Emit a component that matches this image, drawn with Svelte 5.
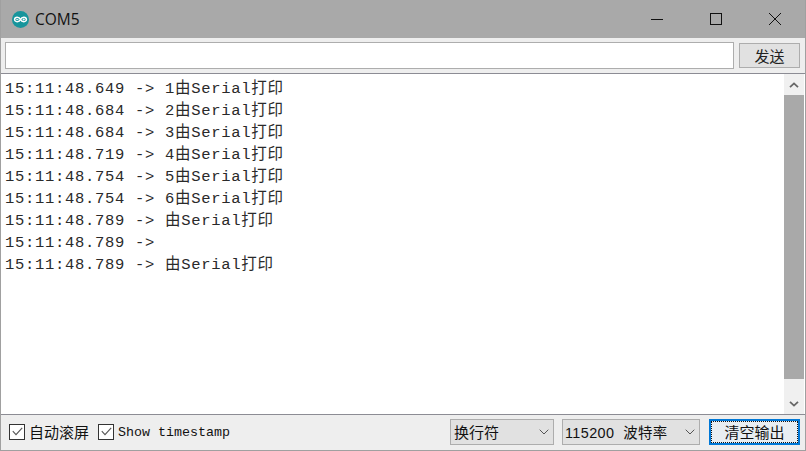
<script>
  const lines = [
    ['15:11:48.649', '1由Serial打印'],
    ['15:11:48.684', '2由Serial打印'],
    ['15:11:48.684', '3由Serial打印'],
    ['15:11:48.719', '4由Serial打印'],
    ['15:11:48.754', '5由Serial打印'],
    ['15:11:48.754', '6由Serial打印'],
    ['15:11:48.789', '由Serial打印'],
    ['15:11:48.789', ''],
    ['15:11:48.789', '由Serial打印']
  ];
</script>

<div class="window">
  <header class="titlebar">
    <svg class="logo" viewBox="0 0 16 16" width="17" height="17">
      <circle cx="8" cy="8" r="8" fill="#17959c" />
      <path d="M8 8C6.8 5.4 2.8 5.2 2.4 8C2.8 10.8 6.8 10.6 8 8C9.2 5.4 13.2 5.2 13.6 8C13.2 10.8 9.2 10.6 8 8Z" fill="none" stroke="#fff" stroke-width="1.4" />
      <path d="M4 8H6M10 8H12M11 7V9" stroke="#fff" stroke-width=".8" />
    </svg>
    <span class="title">COM5</span>
    <div class="controls">
      <svg width="14" height="14" viewBox="0 0 14 14"><path d="M1 7.5H13" stroke="#111" fill="none" /></svg>
      <svg width="14" height="14" viewBox="0 0 14 14"><rect x="1.5" y="1.5" width="11" height="11" stroke="#111" fill="none" /></svg>
      <svg width="14" height="14" viewBox="0 0 14 14"><path d="M1 1L13 13M13 1L1 13" stroke="#111" fill="none" /></svg>
    </div>
  </header>

  <div class="sendbar">
    <input class="input" type="text" />
    <button class="send">发送</button>
  </div>

  <div class="output">
    <div class="log">
      {#each lines as l}
        <div class="line">{l[0]} -&gt; {l[1]}</div>
      {/each}
    </div>
    <div class="scrollbar">
      <div class="arrow">
        <svg width="10" height="6" viewBox="0 0 10 6"><path d="M1 5.2L5 1.4L9 5.2" fill="none" stroke="#666" stroke-width="1.8" /></svg>
      </div>
      <div class="thumb"></div>
      <div class="arrow">
        <svg width="10" height="6" viewBox="0 0 10 6"><path d="M1 .8L5 4.6L9 .8" fill="none" stroke="#666" stroke-width="1.8" /></svg>
      </div>
    </div>
  </div>

  <footer class="footer">
    <label class="check cn">
      <span class="box"><svg width="11" height="9" viewBox="0 0 11 9"><path d="M.8 4.2L4 7.6L10.2 .8" fill="none" stroke="#555" stroke-width="1.1" /></svg></span>
      自动滚屏
    </label>
    <label class="check mono">
      <span class="box"><svg width="11" height="9" viewBox="0 0 11 9"><path d="M.8 4.2L4 7.6L10.2 .8" fill="none" stroke="#555" stroke-width="1.1" /></svg></span>
      <span class="stamp">Show timestamp</span>
    </label>
    <div class="spacer"></div>
    <div class="select nl">
      <span>换行符</span>
      <svg width="10" height="6" viewBox="0 0 10 6"><path d="M.7 .7L5 5L9.3 .7" fill="none" stroke="#555" /></svg>
    </div>
    <div class="select baud">
      <span class="baudtext">115200  波特率</span>
      <svg width="10" height="6" viewBox="0 0 10 6"><path d="M.7 .7L5 5L9.3 .7" fill="none" stroke="#555" /></svg>
    </div>
    <button class="clear"><span class="focus">清空输出</span></button>
  </footer>
</div>

<style>
  :global(body) {
    margin: 0;
    background: #f0f0f0;
  }
  .window {
    width: 806px;
    height: 451px;
    box-sizing: border-box;
    display: flex;
    flex-direction: column;
    background: #eeeeee;
    border: 1px solid #a0a0a0;
    border-top: 0;
    overflow: hidden;
    font-family: "Liberation Sans", "Noto Sans CJK SC", sans-serif;
    color: #111;
  }
  .titlebar {
    height: 38px;
    flex: none;
    display: flex;
    align-items: center;
    background: #a9a9a9;
    padding-left: 11px;
  }
  .logo {
    flex: none;
  }
  .title {
    margin-left: 6px;
    font: 15.5px "Open Sans", "Liberation Sans", sans-serif;
    color: #111;
  }
  .controls {
    margin-left: auto;
    display: flex;
    gap: 45px;
    padding-right: 23px;
  }
  .controls svg {
    display: block;
  }
  .sendbar {
    height: 35px;
    flex: none;
    box-sizing: border-box;
    display: flex;
    align-items: flex-start;
    padding: 4px 5px 0 4px;
  }
  .input {
    width: 729px;
    height: 27px;
    box-sizing: border-box;
    border: 1px solid #adadad;
    background: #fff;
    padding: 0;
    outline: 0;
  }
  .send {
    width: 61px;
    height: 25px;
    margin: 1px 0 0 5px;
    box-sizing: border-box;
    border: 1px solid #adadad;
    background: #e1e1e1;
    font: 15px "Noto Sans CJK SC", sans-serif;
    color: #222;
    padding: 0;
  }
  .output {
    flex: 1;
    min-height: 0;
    display: flex;
    background: #fff;
    border-top: 1px solid #8c8c94;
    border-bottom: 1px solid #8c8c94;
  }
  .log {
    flex: 1;
    padding: 4px 0 0 4px;
    font: 15.5px/22px "Liberation Mono", "Noto Sans CJK SC", monospace;
    letter-spacing: 0.7px;
    color: #2a2a2a;
  }
  .line {
    height: 22px;
    white-space: pre;
  }
  .scrollbar {
    width: 20px;
    margin-right: 1px;
    flex: none;
    display: flex;
    flex-direction: column;
    background: #f0f0f0;
  }
  .arrow {
    height: 21px;
    flex: none;
    display: flex;
    align-items: center;
    justify-content: center;
  }
  .thumb {
    height: 284px;
    flex: none;
    background: #a9a9a9;
  }
  .scrollbar .arrow:last-child {
    margin-top: auto;
  }
  .footer {
    height: 35px;
    flex: none;
    box-sizing: border-box;
    display: flex;
    align-items: center;
    padding: 0 5px 2px 8px;
  }
  .check {
    display: flex;
    align-items: center;
    gap: 4px;
    white-space: nowrap;
  }
  .cn {
    font: 15px "Noto Sans CJK SC", sans-serif;
    margin-right: 9px;
  }
  .mono {
    font: 13.33px "Liberation Mono", monospace;
    letter-spacing: 0;
    gap: 4px;
  }
  .stamp {
    padding-top: 2px;
  }
  .box {
    width: 16px;
    height: 16px;
    box-sizing: border-box;
    border: 1px solid #333;
    background: #fff;
    display: flex;
    align-items: center;
    justify-content: center;
  }
  .spacer {
    flex: 1;
  }
  .select {
    height: 26px;
    box-sizing: border-box;
    border: 1px solid #adadad;
    background: #e1e1e1;
    display: flex;
    align-items: center;
    justify-content: space-between;
    padding: 0 4px 0 3px;
    font: 15px "Noto Sans CJK SC", sans-serif;
  }
  .nl {
    width: 104px;
    margin-right: 8px;
  }
  .baud {
    width: 138px;
    margin-right: 9px;
    padding-left: 2px;
    font: 14.4px "Liberation Sans", "Noto Sans CJK SC", sans-serif;
  }
  .baudtext {
    white-space: pre;
    letter-spacing: 0.4px;
  }
  .clear {
    width: 91px;
    height: 26px;
    box-sizing: border-box;
    border: 2px solid #0078d7;
    background: #e5f1fb;
    padding: 0;
    font: 15px "Noto Sans CJK SC", sans-serif;
    color: #111;
  }
  .focus {
    display: flex;
    height: 100%;
    box-sizing: border-box;
    align-items: center;
    justify-content: center;
    outline: 1px dotted #111;
    outline-offset: -1px;
    background: #e8eef2;
  }
</style>
